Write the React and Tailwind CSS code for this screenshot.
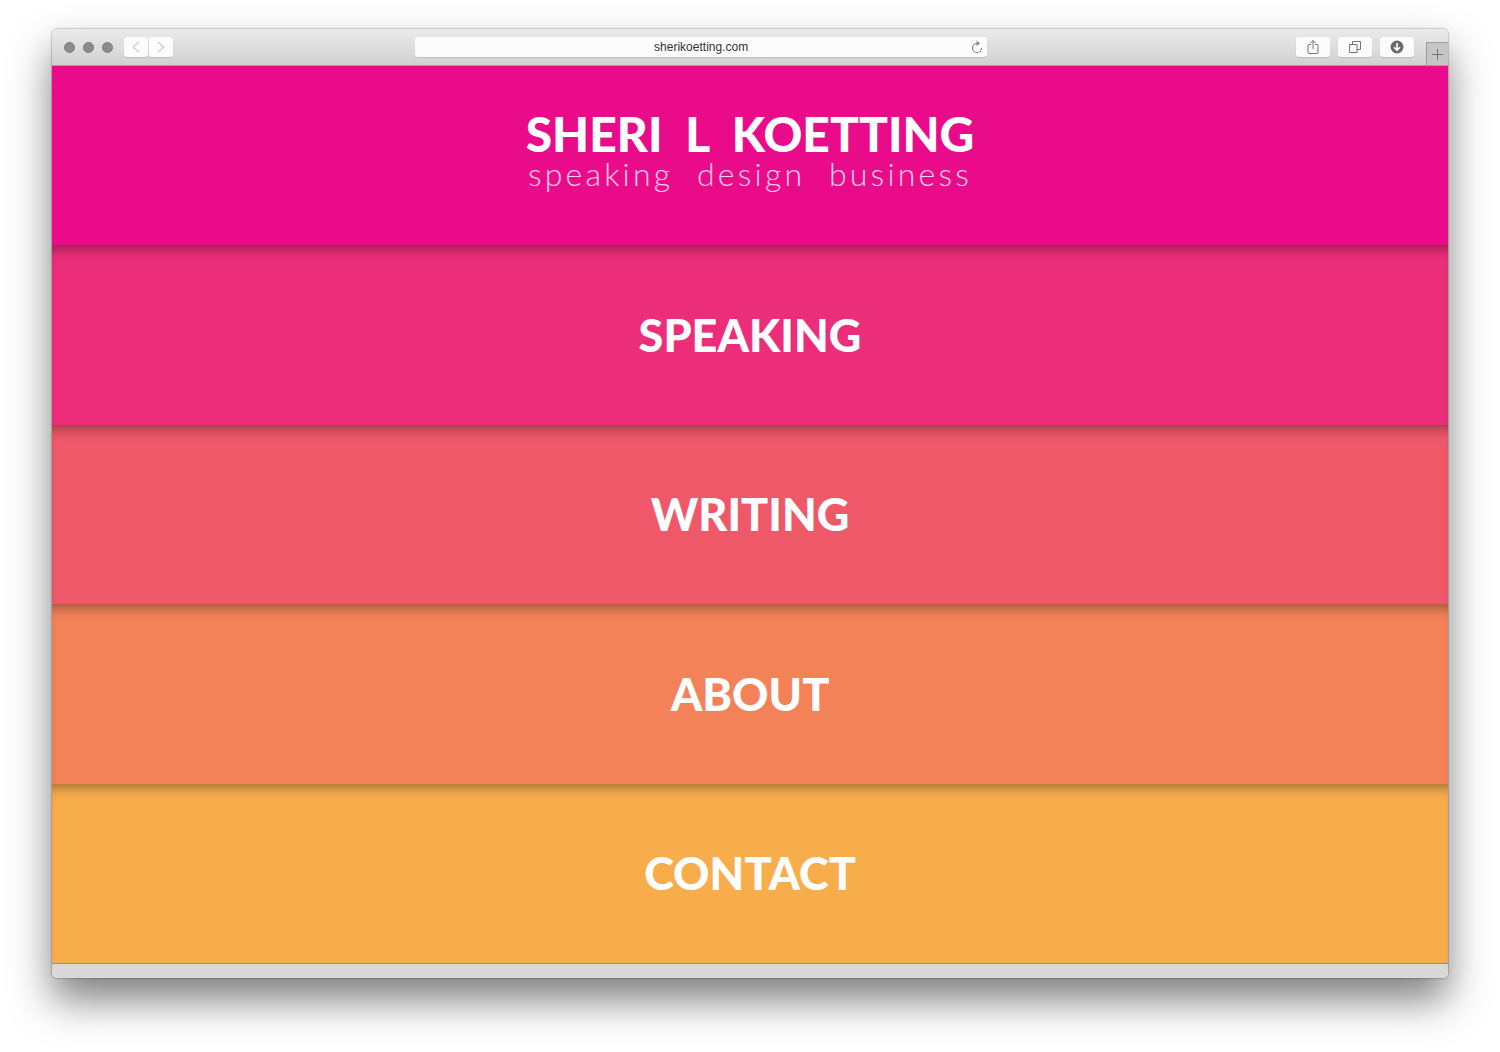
import { clsx } from "clsx";

const sections = [
  { id: "speaking", label: "SPEAKING", color: "bg-[#eb2d7a]" },
  { id: "writing", label: "WRITING", color: "bg-[#ef5869]" },
  { id: "about", label: "ABOUT", color: "bg-[#f38259]" },
  { id: "contact", label: "CONTACT", color: "bg-[#f8ad4b]" },
];

const controlClass = "flex h-5 items-center justify-center rounded-[3px] bg-[#fcfcfc] shadow-[0_1px_1px_rgba(0,0,0,0.12)]";

function ToolbarButton({ label, className, children }) {
  return (
    <button type="button" aria-label={label} className={clsx(controlClass, className)}>
      {children}
    </button>
  );
}

function ShareIcon() {
  return (
    <svg width="14" height="16" viewBox="0 0 14 16" fill="none" stroke="#737373" aria-hidden="true">
      <path d="M5 5.5H3a1 1 0 0 0-1 1v7a1 1 0 0 0 1 1h8a1 1 0 0 0 1-1v-7a1 1 0 0 0-1-1H9M7 10V1.5M4.5 4 7 1.5 9.5 4" />
    </svg>
  );
}

function TabsIcon() {
  return (
    <svg width="12" height="12" viewBox="0 0 12 12" fill="none" stroke="#737373" aria-hidden="true">
      <path d="M.5 3.5h7.5v8H.5zM3.5 3.5V.5h8v8H8" />
    </svg>
  );
}

function DownloadIcon() {
  return (
    <svg width="14" height="14" viewBox="0 0 14 14" aria-hidden="true">
      <circle cx="7" cy="7" r="6.5" fill="#6b6b6b" />
      <path d="M7 3v7M4 7.2l3 3 3-3" fill="none" stroke="#fff" strokeWidth="1.6" />
    </svg>
  );
}

function ReloadIcon() {
  return (
    <svg width="12" height="14" viewBox="0 0 12 14" aria-hidden="true">
      <path d="M10.5 8A4.5 4.5 0 1 1 6 3.5h1" fill="none" stroke="#858585" strokeWidth="1.2" />
      <path d="M5.5.5 9 3.5 5.5 6z" fill="#858585" />
    </svg>
  );
}

function Toolbar() {
  return (
    <div className="grid h-[37px] grid-cols-[26%_41%_1fr] items-center border-b border-[#a79ba1] bg-linear-to-b from-[#ebebeb] to-[#d1d1d1]">
      <div className="flex items-center pl-3">
        <div className="flex gap-2">
          <span className="size-[11px] rounded-full border border-[#7c7c80] bg-[#8b8b90]" />
          <span className="size-[11px] rounded-full border border-[#7c7c80] bg-[#8b8b90]" />
          <span className="size-[11px] rounded-full border border-[#7c7c80] bg-[#8b8b90]" />
        </div>
        <div className="ml-[11px] flex gap-px">
          <ToolbarButton label="Back" className="w-6">
            <svg width="8" height="12" viewBox="0 0 8 12" fill="none" stroke="#cacaca" strokeWidth="1.2" aria-hidden="true">
              <path d="M7 1 1 6 7 11" />
            </svg>
          </ToolbarButton>
          <ToolbarButton label="Forward" className="w-6">
            <svg width="8" height="12" viewBox="0 0 8 12" fill="none" stroke="#cacaca" strokeWidth="1.2" aria-hidden="true">
              <path d="M1 1 7 6 1 11" />
            </svg>
          </ToolbarButton>
        </div>
      </div>
      <div className={clsx(controlClass, "pr-1 pl-4")}>
        <input
          type="text"
          aria-label="Address"
          defaultValue="sherikoetting.com"
          className="min-w-0 flex-1 bg-transparent text-center text-[12px] leading-5 text-[#333] outline-none"
        />
        <button type="button" aria-label="Reload">
          <ReloadIcon />
        </button>
      </div>
      <div className="flex items-center justify-end gap-2 self-stretch">
        <ToolbarButton label="Share" className="w-[34px]">
          <ShareIcon />
        </ToolbarButton>
        <ToolbarButton label="Show tabs" className="w-[34px]">
          <TabsIcon />
        </ToolbarButton>
        <ToolbarButton label="Downloads" className="w-[34px]">
          <DownloadIcon />
        </ToolbarButton>
        <button
          type="button"
          aria-label="New tab"
          className="ml-1 flex h-[23px] w-[22px] items-center justify-center self-end border-t border-l border-[#9d9d9d] bg-[#c6c6c6]"
        >
          <svg width="11" height="11" viewBox="0 0 11 11" stroke="#777" aria-hidden="true">
            <path d="M5.5 0v11M0 5.5h11" />
          </svg>
        </button>
      </div>
    </div>
  );
}

export default function App() {
  return (
    <div className="flex min-h-screen flex-col bg-white px-[52px] pt-[29px] pb-[74px] font-['Liberation_Sans',Arial,sans-serif]">
      <div className="flex flex-1 flex-col rounded-[5px] shadow-[0_0_1px_1px_rgba(0,0,0,0.18),0_22px_40px_rgba(0,0,0,0.5)]">
        <div className="flex flex-1 flex-col overflow-hidden rounded-[5px]">
          <Toolbar />
          <main className="grid flex-1 grid-rows-5 text-center font-['Lato',sans-serif] text-white">
            <header className="flex flex-col items-center justify-center bg-[#e90b8a] pb-3">
              <h1 className="text-[48px] leading-[48px] font-black whitespace-pre">SHERI  L  KOETTING</h1>
              <p className="text-[32px] leading-[32px] font-light tracking-widest whitespace-pre text-white/80">speaking  design  business</p>
            </header>
            {sections.map(({ id, label, color }) => (
              <a
                key={id}
                id={id}
                href={`#${id}`}
                className={clsx(
                  "flex items-center justify-center text-[45px] leading-[48px] font-black shadow-[inset_0_12px_12px_-8px_rgba(0,0,0,0.35)]",
                  color
                )}
              >
                {label}
              </a>
            ))}
          </main>
          <footer className="h-[15px] border-t border-[#9b8c80] bg-[#d9d9d9]" />
        </div>
      </div>
    </div>
  );
}
